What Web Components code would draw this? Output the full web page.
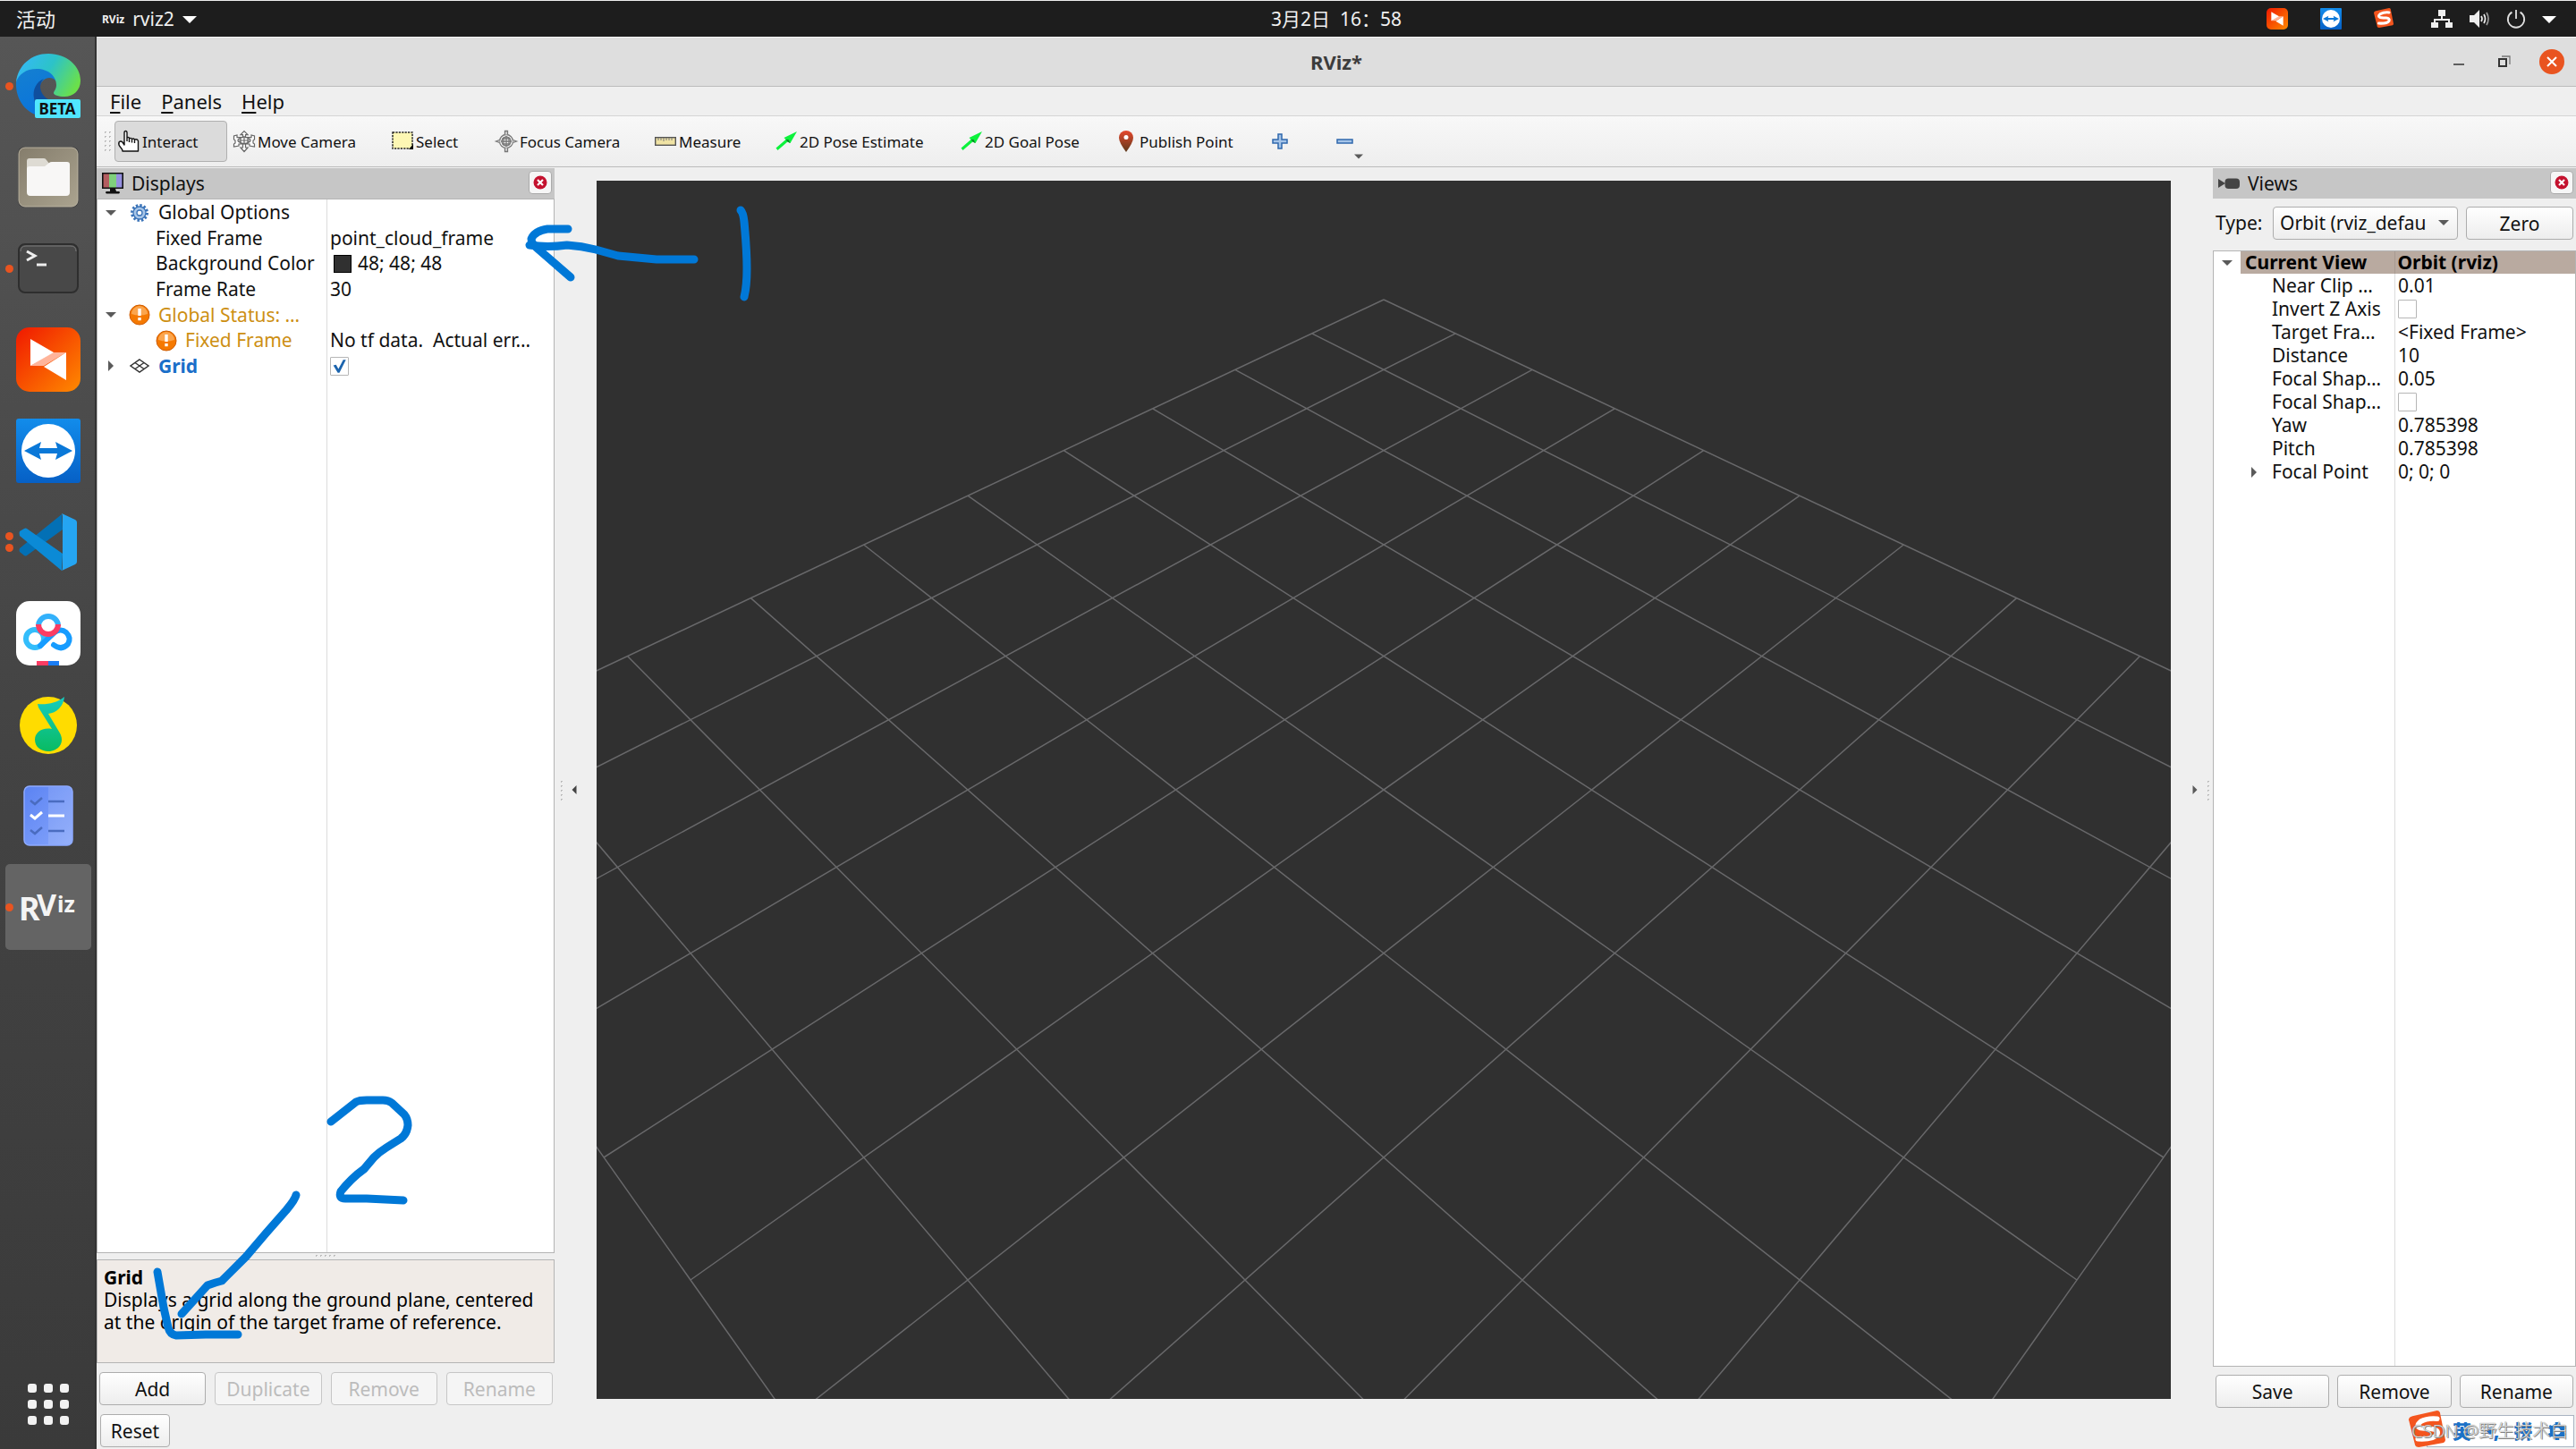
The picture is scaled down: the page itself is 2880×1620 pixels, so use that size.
<!DOCTYPE html>
<html lang="zh-CN">
<head>
<meta charset="utf-8">
<title>RViz*</title>
<style>
  html, body {
    margin: 0;
    height: 100%;
  }
  body {
    font-family: "Noto Sans", "Noto Sans CJK SC", sans-serif;
    font-size: 21px;
    line-height: 25px;
    color: #111;
    background: #efefef;
    overflow: hidden;
  }
</style>
</head>
<body>
<rviz-desktop></rviz-desktop>

<script>
const icons = {
  edge: `<svg viewBox="0 0 72 72">
    <defs>
      <linearGradient id="e1" x1="0" y1="0.2" x2="1" y2="0.6"><stop offset="0" stop-color="#35b8f8"/><stop offset="0.5" stop-color="#2cc3c8"/><stop offset="1" stop-color="#6be04a"/></linearGradient>
      <linearGradient id="e2" x1="0" y1="0" x2="0.4" y2="1"><stop offset="0" stop-color="#1580d0"/><stop offset="1" stop-color="#0a74dc"/></linearGradient>
    </defs>
    <path fill="url(#e2)" d="M0 32c2-10 10-16 22-16 13 0 22 7 23 15-3-4-8-5-12-3-6 3-8 10-6 17 3 9 10 14 19 16v6c-5 3-11 4-17 3C12 68-1 52 0 32z"/>
    <path fill="#0f4f9e" d="M31 28c-8 3-13 12-11 22 1 8 5 14 10 19l16-1V55c-10-2-18-8-19-17 0-4 1-7 4-10z"/>
    <path fill="url(#e1)" d="M0 32C2 13 17 0 36 0c21 0 36 14 36 30 0 11-8 18-18 18-7 0-12-2-12-4s3-4 3-9c0-10-9-18-22-18C11 17 3 23 0 32z"/>
    <rect x="21" y="51" width="51" height="21" rx="2" fill="#50e6ff"/>
    <text x="46" y="68" font-family="Noto Sans" font-size="17" font-weight="700" text-anchor="middle" fill="#111">BETA</text>
  </svg>`,
  files: `<svg viewBox="0 0 72 72">
    <defs><linearGradient id="f1" x1="0" y1="0" x2="1" y2="1"><stop offset="0" stop-color="#857d6c"/><stop offset="1" stop-color="#aaa38f"/></linearGradient></defs>
    <rect x="2" y="2" width="68" height="68" rx="8" fill="#3a3a3a"/>
    <rect x="3" y="3" width="66" height="66" rx="7" fill="url(#f1)" stroke="#bdb6a4"/>
    <path fill="#dedbd3" d="M12 32V18q0-3 3-3h16q2 0 3 2l4 5v10z"/>
    <path fill="#f8f7f6" d="M12 27q0-3 3-3h17l5-4q1-1 3-1h17q3 0 3 3v31q0 4-4 4H16q-4 0-4-4z"/>
  </svg>`,
  terminal: `<svg viewBox="0 0 72 72">
    <rect x="3" y="9" width="66" height="54" rx="7" fill="#484848" stroke="#2e2e2e" stroke-width="2"/>
    <path fill="none" stroke="#7a7a7a" d="M5 17q0-6 6-6h50q6 0 6 6"/>
    <path fill="none" stroke="#eee" stroke-width="3" d="M12 17l9 5-9 5M23 32h11"/>
  </svg>`,
  todesk: `<svg viewBox="0 0 72 72">
    <defs><linearGradient id="t1" x1="0" y1="0" x2="1" y2="1"><stop offset="0" stop-color="#f01800"/><stop offset="1" stop-color="#ff8a00"/></linearGradient></defs>
    <rect width="72" height="72" rx="15" fill="url(#t1)"/>
    <path fill="#ffb49a" d="M16 43L41 28h15L31 43z"/>
    <path fill="#fff" d="M16 13l26 15-26 15zM56 28v31L31 44z"/>
  </svg>`,
  teamviewer: `<svg viewBox="0 0 72 72">
    <defs><linearGradient id="v1" x1="0" y1="0" x2="0" y2="1"><stop offset="0" stop-color="#128ceb"/><stop offset="1" stop-color="#0660c6"/></linearGradient></defs>
    <rect width="72" height="72" rx="3" fill="url(#v1)"/>
    <circle cx="36" cy="36" r="30" fill="#fff"/>
    <path fill="#0a78d8" d="M9 36l19-10-2 7h20l-2-7 19 10-19 10 2-7H26l2 7z"/>
  </svg>`,
  vscode: `<svg viewBox="0 0 72 72">
    <path fill="#0370b5" d="M51 5L4 43q-1 2 0 4l5 4q2 1 3 0l40-29z"/>
    <path fill="#0b8ad6" d="M51 68L4 29q-1-3 0-5l5-3q2-1 3 0l40 28z"/>
    <path fill="#25a5f2" d="M51 4l15 7q2 1 2 3v44q0 2-2 3l-15 7q1-1 1-4V8q0-3-1-4z"/>
  </svg>`,
  netdisk: `<svg viewBox="0 0 72 72">
    <rect width="72" height="72" rx="15" fill="#fff"/>
    <circle cx="21" cy="42" r="10" fill="none" stroke="#33bdfb" stroke-width="6"/>
    <path fill="none" stroke="#169cff" stroke-width="6" stroke-linecap="round" d="M27 50L43 35q7-5 13 0 6 6 2 13-7 8-16 1"/>
    <path fill="none" stroke="#33b1fb" stroke-width="6" d="M25 28a11 11 0 0 1 22 0"/>
    <path fill="none" stroke="#fb3c63" stroke-width="6" d="M25 26a11 11 0 1 0 22 0"/>
    <path fill="#fb3c63" d="M23 67h13v5H23z"/><path fill="#1a7df5" d="M36 67h12v5H36z"/>
  </svg>`,
  music: `<svg viewBox="0 0 72 72">
    <defs><linearGradient id="m1" x1="0" y1="0" x2="0" y2="1"><stop offset="0" stop-color="#16ccc0"/><stop offset="1" stop-color="#09bb62"/></linearGradient></defs>
    <circle cx="36" cy="37" r="32" fill="#ffdc00"/>
    <path fill="url(#m1)" d="M24 13c10 1 22-1 30-8-1 11-9 18-18 19l12 20c8 12-1 22-12 22-8 0-15-5-15-13s8-14 19-12L25 17z"/>
  </svg>`,
  todo: `<svg viewBox="0 0 72 72">
    <defs><linearGradient id="d1" x1="0" y1="0" x2="1" y2="1"><stop offset="0" stop-color="#5b83f3"/><stop offset="1" stop-color="#87a6fb"/></linearGradient></defs>
    <rect x="9" y="3" width="54" height="66" rx="6" fill="url(#d1)" stroke="#8eabff" stroke-width="1.5"/>
    <path fill="#fff" opacity="0.12" d="M36 4h21q5 0 5 5v54q0 5-5 5H36z"/>
    <g fill="none" stroke-width="2.5">
      <path stroke="#4a6cc0" d="M16 19l5 4 8-7M36 20h18M16 52l5 4 8-7M36 53h18"/>
      <path stroke="#fff" stroke-width="3" d="M16 35l5 4 8-7M36 36h18"/>
    </g>
  </svg>`,
  rviz: `<svg viewBox="0 0 72 72">
    <g font-family="Noto Sans" font-weight="700" fill="#f4f4f4">
      <text x="3" y="51" font-size="36">R</text><text x="23" y="46" font-size="34">V</text><text x="46" y="42" font-size="25">iz</text>
    </g>
  </svg>`,
  apps: `<svg viewBox="0 0 72 72" fill="#f2f2f2">
    ${[13, 31, 49].map(y => [13, 31, 49].map(x => `<rect x="${x}" y="${y}" width="10" height="10" rx="3"/>`).join('')).join('')}
  </svg>`,
  sogou: `<svg viewBox="0 0 40 40">
    <path fill="#f4551e" d="M4 6L31 0q2 0 3 2l6 30q0 2-2 3l-27 5q-3 0-4-2L0 10q0-3 4-4z"/>
    <path fill="none" stroke="#fff" stroke-width="5.5" stroke-linecap="round" d="M31 9q-11-1-18 3-6 5 0 7 6 1 12 1 8 1 6 6-4 6-21 5"/>
  </svg>`,
  network: `<svg viewBox="0 0 24 24" fill="#eee">
    <path d="M8 2h8v7H8zM0 16h8v6H0zM16 16h8v6h-8z"/>
    <path fill="none" stroke="#eee" stroke-width="2" d="M12 8v5M4 17v-4h16v4"/>
  </svg>`,
  volume: `<svg viewBox="0 0 24 24">
    <path fill="#eee" d="M1 8h5l6-6v20l-6-6H1z"/>
    <path fill="none" stroke="#eee" stroke-width="1.7" d="M14 9q2 3 0 6M17 7q3 5 0 10"/>
    <path fill="none" stroke="#999" stroke-width="1.7" d="M20 5q4 7 0 14"/>
  </svg>`,
  power: `<svg viewBox="0 0 24 24">
    <path fill="none" stroke="#ddd" stroke-width="2" d="M7 4a10 10 0 1 0 10 0M12 1v11"/>
  </svg>`,
  caret: `<svg viewBox="0 0 16 16"><path fill="#fff" d="M0 5h16l-8 8z"/></svg>`,
  down: `<svg viewBox="0 0 12 12"><path fill="#5a5a5a" d="M0 3h12L6 9z"/></svg>`,
  right: `<svg viewBox="0 0 12 12"><path fill="#5a5a5a" d="M3 0l6 6-6 6z"/></svg>`,
  left: `<svg viewBox="0 0 12 12"><path fill="#444" d="M9 0L3 6l6 6z"/></svg>`,
  hand: `<svg viewBox="0 0 24 24">
    <path fill="#fff" stroke="#111" stroke-width="1.4" stroke-linejoin="round" d="M7 14V2.500q0-2 1.500-2t1.500 2V8q1-1 2.500 0v1q2-1.500 3 .5 2-1.200 3 .5 3-1 4 1.500V23H5q0-2-2-4-3-3-2-6 2-2 4 0l2 3zM10 8v4M12.500 9v4M15.500 9.500v4M18.500 10v4"/>
  </svg>`,
  move: `<svg viewBox="0 0 24 24" fill="#fff" stroke="#666" stroke-width="1.200">
    <path d="M12 .7l4 4h-2.500v3H20V5l3.500 1v4L22 11v3l1.500 1v3L18 17v-2h-4.500v4H16l-4 4.500-4-4.500h2.500v-4H6v2l-5.500 1v-3L2 14v-3L.5 10V6L4 5v2.700h6.500v-3H8z"/>
    <path fill="none" d="M5 10q7-6 14 0M5 12q7 5 14 0M12 6v10M4 11h16M8 8v7M16 8v7"/>
  </svg>`,
  select: `<svg viewBox="0 0 24 24">
    <path fill="#fdf7b4" stroke="#222" stroke-width="1.500" stroke-dasharray="2.200 1.200" d="M1 2h22v18H1z"/>
    <path fill="#000" d="M24 15v6h-5z"/>
  </svg>`,
  focus: `<svg viewBox="0 0 24 24" fill="none" stroke="#777" stroke-width="1.300">
    <circle cx="12" cy="12" r="7.500" fill="#fff"/><circle cx="12" cy="12" r="5"/>
    <path d="M12 6v12M6 12h12M9 7.500v9M15 7.500v9M7.500 9h9M7.500 15h9"/>
    <path fill="#ddd" d="M10.500 4.500V.5h3v4M10.500 19.500v4h3v-4M4.500 10.500L.5 12l4 1.500M19.500 10.500l4 1.500-4 1.500"/>
  </svg>`,
  measure: `<svg viewBox="0 0 24 24">
    <rect x="0.700" y="7.700" width="22.600" height="8.600" fill="#f0e3a4" stroke="#555" stroke-width="1.400"/>
    <path stroke="#777" d="M4 8v3M7 8v3M10 8v4M13 8v3M16 8v3M19 8v3"/>
  </svg>`,
  arrow: `<svg viewBox="0 0 24 24">
    <path fill="#0cf23c" d="M24 1L16.500 14l-3-1.500L2.500 22 .5 19.500 11.500 10 9.500 8z"/>
    <path fill="#0a8a26" d="M11.500 10l2 2.500 3 1.500-2-4z"/>
  </svg>`,
  pin: `<svg viewBox="0 0 24 24">
    <defs><linearGradient id="p1" x1="0" y1="0" x2="0" y2="1"><stop offset="0" stop-color="#e6472c"/><stop offset="1" stop-color="#5c3a1c"/></linearGradient></defs>
    <path fill="url(#p1)" d="M12 24Q4 13 4 8a8 8 0 0 1 16 0q0 5-8 16z"/><circle cx="12" cy="7.500" r="2.500" fill="#fff"/>
  </svg>`,
  plus: `<svg viewBox="0 0 24 24"><path fill="#a5c4e8" stroke="#2f68ad" stroke-width="1.500" d="M10 4h4v6h6v4h-6v6h-4v-6H4v-4h6z"/></svg>`,
  minus: `<svg viewBox="0 0 24 24"><path fill="#a5c4e8" stroke="#2f68ad" stroke-width="1.500" d="M4 10h17v4H4z"/></svg>`,
  monitor: `<svg viewBox="0 0 24 24">
    <path fill="#b35d60" d="M1 1h8v16H1z"/><path fill="#7fd07c" d="M8 1h8v16H8z"/><path fill="#9590e0" d="M16 1h7v16h-7z"/>
    <path fill="none" stroke="#111" stroke-width="1.600" d="M.8.8h22.400v16.400H.8z"/>
    <path fill="#111" d="M9 18h6l1 3h3q2 1 0 2.500H5q-2-1.500 0-2.500h4z"/>
  </svg>`,
  camera: `<svg viewBox="0 0 24 24"><path fill="#444" d="M0 7l8 5-8 5z"/><rect x="7.500" y="6.500" width="16.500" height="11.500" rx="4" fill="#444"/></svg>`,
  gear: `<svg viewBox="0 0 24 24">
    <circle cx="12" cy="12" r="8.500" fill="none" stroke="#3a73b8" stroke-width="3" stroke-dasharray="2.450 2"/>
    <circle cx="12" cy="12" r="7" fill="#a8c6e8" stroke="#3a73b8" stroke-width="1.300"/>
    <circle cx="12" cy="12" r="3" fill="#fff" stroke="#3a73b8" stroke-width="1.300"/>
  </svg>`,
  warn: `<svg viewBox="0 0 24 24">
    <circle cx="12" cy="12" r="11" fill="#f57900" stroke="#ce5c00"/>
    <path fill="#fba54d" d="M3 11a9 9 0 0 1 18 0q-9 3-18 0z"/>
    <path fill="#fff" d="M10.300 5h3.400v8h-3.400zM10.300 15h3.400v3.200h-3.400z"/>
  </svg>`,
  grid: `<svg viewBox="0 0 24 24"><path fill="none" stroke="#333" stroke-width="1.500" d="M12 5l10 7-10 7-10-7zM7 8.500l10 7M17 8.500l-10 7"/></svg>`,
  close: `<svg viewBox="0 0 24 24"><circle cx="12" cy="12" r="7.500" fill="#c4122f"/><path stroke="#fff" stroke-width="2.200" d="M9 9l6 6M15 9l-6 6"/></svg>`,
  minimize: `<svg viewBox="0 0 24 24"><path stroke="#333" stroke-width="1.500" d="M6 15h12"/></svg>`,
  restore: `<svg viewBox="0 0 24 24" fill="none" stroke="#333"><path stroke-width="2" d="M6 9h8v8H6z"/><path stroke="#777" stroke-width="1.300" d="M9 6h9v9"/></svg>`,
  quit: `<svg viewBox="0 0 28 28"><circle cx="14" cy="14" r="14" fill="#e95420"/><path stroke="#fff" stroke-width="2" d="M9 9l10 10M19 9L9 19"/></svg>`,
  cog: `<svg viewBox="0 0 24 24">
    <circle cx="12" cy="12" r="6.500" fill="none" stroke="#1b72c8" stroke-width="5"/>
    <path stroke="#1b72c8" stroke-width="5" d="M12 1v4M12 19v4M2 6.500l4 2M18 15.500l4 2M2 17.500l4-2M18 8.500l4-2"/>
  </svg>`
};

class AppIcon extends HTMLElement {
  connectedCallback() {
    this.attachShadow({ mode: 'open' });
    const size = this.getAttribute('size') || 24;
    this.shadowRoot.innerHTML = `
      <style>
        :host { display: block; flex: none; width: ${size}px; height: ${size}px; }
        svg { display: block; width: 100%; height: 100%; overflow: visible; }
      </style>
      ${icons[this.getAttribute('name')]}
    `;
  }
}
customElements.define('app-icon', AppIcon);

class TopBar extends HTMLElement {
  connectedCallback() {
    this.attachShadow({ mode: 'open' });
    this.shadowRoot.innerHTML = `
      <style>
        :host {
          display: grid;
          grid-template-columns: 108px 1fr auto 1fr;
          align-items: center;
          box-sizing: border-box;
          height: 41px;
          border-top: 1px solid #eee;
          background: #1d1d1d;
          color: #f0f0f0;
        }
        button { all: unset; display: flex; align-items: center; }
        .activities { padding-left: 18px; font-size: 22px; }
        .app { gap: 9px; padding-left: 6px; }
        .logo { font-weight: 700; font-size: 12px; }
        .clock { font-family: "Noto Sans", "Noto Sans CJK TC", sans-serif; }
        .tray { display: flex; justify-content: flex-end; align-items: center; padding-right: 22px; }
        .indicators { display: flex; gap: 36px; margin-right: 42px; }
        .system { gap: 18px; }
      </style>
      <button class="activities">活动</button>
      <button class="app"><span class="logo">RViz</span><span>rviz2</span><app-icon name="caret" size="16"></app-icon></button>
      <button class="clock" lang="zh-TW">3月2日&nbsp; 16：58</button>
      <div class="tray">
        <div class="indicators">
          <app-icon name="todesk"></app-icon>
          <app-icon name="teamviewer"></app-icon>
          <app-icon name="sogou" size="22"></app-icon>
        </div>
        <button class="system" aria-label="System">
          <app-icon name="network"></app-icon>
          <app-icon name="volume"></app-icon>
          <app-icon name="power" size="22"></app-icon>
          <app-icon name="caret" size="16"></app-icon>
        </button>
      </div>
    `;
  }
}
customElements.define('top-bar', TopBar);

class DockItem extends HTMLElement {
  connectedCallback() {
    this.attachShadow({ mode: 'open' });
    const windows = Number(this.getAttribute('windows') || 0);
    this.shadowRoot.innerHTML = `
      <style>
        :host { display: block; }
        button {
          all: unset;
          position: relative;
          display: grid;
          place-items: center;
          width: 96px;
          height: 96px;
          border-radius: 5px;
        }
        :host([active]) button { background: #646464; }
        .dots {
          position: absolute;
          left: 0;
          display: grid;
          gap: 4px;
        }
        .dots i { width: 9px; height: 9px; border-radius: 50%; background: #e95420; }
      </style>
      <button aria-label="${this.getAttribute('icon')}">
        <span class="dots">${'<i></i>'.repeat(windows)}</span>
        <app-icon name="${this.getAttribute('icon')}" size="72"></app-icon>
      </button>
    `;
  }
}
customElements.define('dock-item', DockItem);

class LauncherDock extends HTMLElement {
  connectedCallback() {
    this.attachShadow({ mode: 'open' });
    this.shadowRoot.innerHTML = `
      <style>
        :host {
          display: flex;
          flex-direction: column;
          gap: 6px;
          box-sizing: border-box;
          padding: 7px 4px 2px 6px;
          border-right: 2px solid #333;
          background: linear-gradient(#565656, #434343 50%, #3a3a3a);
        }
        .apps { margin-top: auto; }
      </style>
      <dock-item icon="edge" windows="1"></dock-item>
      <dock-item icon="files"></dock-item>
      <dock-item icon="terminal" windows="1"></dock-item>
      <dock-item icon="todesk"></dock-item>
      <dock-item icon="teamviewer"></dock-item>
      <dock-item icon="vscode" windows="2"></dock-item>
      <dock-item icon="netdisk"></dock-item>
      <dock-item icon="music"></dock-item>
      <dock-item icon="todo"></dock-item>
      <dock-item icon="rviz" windows="1" active></dock-item>
      <dock-item class="apps" icon="apps"></dock-item>
    `;
  }
}
customElements.define('launcher-dock', LauncherDock);

class TitleBar extends HTMLElement {
  connectedCallback() {
    this.attachShadow({ mode: 'open' });
    this.shadowRoot.innerHTML = `
      <style>
        :host {
          display: grid;
          grid-template-columns: 1fr auto 1fr;
          align-items: center;
          box-sizing: border-box;
          height: 56px;
          border-top: 1px solid #f6f6f6;
          border-bottom: 1px solid #bcbcbc;
          background: #dedede;
        }
        h1 { grid-column: 2; margin: 0; font-size: 22px; line-height: 25px; color: #3c3c3c; }
        .buttons { display: flex; justify-content: flex-end; align-items: center; gap: 27px; padding-right: 13px; }
        button { all: unset; }
      </style>
      <h1><slot></slot></h1>
      <div class="buttons">
        <button aria-label="Minimize"><app-icon name="minimize"></app-icon></button>
        <button aria-label="Restore"><app-icon name="restore"></app-icon></button>
        <button aria-label="Close"><app-icon name="quit" size="28"></app-icon></button>
      </div>
    `;
  }
}
customElements.define('title-bar', TitleBar);

class MenuBar extends HTMLElement {
  connectedCallback() {
    this.attachShadow({ mode: 'open' });
    this.shadowRoot.innerHTML = `
      <style>
        :host {
          display: flex;
          align-items: center;
          gap: 22px;
          box-sizing: border-box;
          height: 33px;
          padding: 0 15px;
          border-bottom: 1px solid #d4d4d4;
          font-size: 22px;
        }
        button { all: unset; }
        u { text-underline-offset: 3px; text-decoration-thickness: 2px; }
      </style>
      <button><u>F</u>ile</button>
      <button><u>P</u>anels</button>
      <button><u>H</u>elp</button>
    `;
  }
}
customElements.define('menu-bar', MenuBar);

class ToolButton extends HTMLElement {
  connectedCallback() {
    this.attachShadow({ mode: 'open' });
    this.shadowRoot.innerHTML = `
      <style>
        :host { display: block; width: var(--w); }
        button {
          all: unset;
          display: flex;
          align-items: center;
          gap: 3px;
          box-sizing: border-box;
          width: 100%;
          height: 46px;
          padding-left: 3px;
          border: 1px solid transparent;
          border-radius: 4px;
          font-size: 17px;
          white-space: nowrap;
        }
        :host([checked]) button { background: #dbdbdb; border-color: #b0b0b0; }
      </style>
      <button aria-label="${this.getAttribute('icon')}"><app-icon name="${this.getAttribute('icon')}"></app-icon><slot></slot></button>
    `;
  }
}
customElements.define('tool-button', ToolButton);

class ToolBar extends HTMLElement {
  connectedCallback() {
    this.attachShadow({ mode: 'open' });
    this.shadowRoot.innerHTML = `
      <style>
        :host {
          display: flex;
          align-items: center;
          gap: 3px;
          box-sizing: border-box;
          height: 57px;
          padding-left: 7px;
          border-bottom: 1px solid #bcbcbc;
          background: linear-gradient(#f8f8f8, #eee);
        }
        .grip {
          width: 10px;
          height: 27px;
          background: radial-gradient(circle, #bbb 1px, transparent 1px) 0 0 / 5px 5px;
        }
        .more { align-self: flex-end; margin-bottom: 6px; }
      </style>
      <div class="grip"></div>
      <tool-button icon="hand" checked style="--w: 126px">Interact</tool-button>
      <tool-button icon="move" style="--w: 174px">Move Camera</tool-button>
      <tool-button icon="select" style="--w: 113px">Select</tool-button>
      <tool-button icon="focus" style="--w: 175px">Focus Camera</tool-button>
      <tool-button icon="measure" style="--w: 132px">Measure</tool-button>
      <tool-button icon="arrow" style="--w: 204px">2D Pose Estimate</tool-button>
      <tool-button icon="arrow" style="--w: 170px">2D Goal Pose</tool-button>
      <tool-button icon="pin" style="--w: 169px">Publish Point</tool-button>
      <tool-button icon="plus" style="--w: 69px"></tool-button>
      <tool-button icon="minus" style="--w: 24px"></tool-button>
      <app-icon class="more" name="down" size="10"></app-icon>
    `;
  }
}
customElements.define('tool-bar', ToolBar);

class PushButton extends HTMLElement {
  connectedCallback() {
    this.attachShadow({ mode: 'open' });
    this.shadowRoot.innerHTML = `
      <style>
        :host { display: block; }
        button {
          box-sizing: border-box;
          width: 100%;
          height: 37px;
          padding: 1px 0 0;
          border: 1px solid #adadad;
          border-radius: 4px;
          background: linear-gradient(#fff, #ededed);
          font: inherit;
          color: inherit;
        }
        button:disabled { border-color: #c6c6c6; background: #f5f5f5; color: #bcbcbc; }
      </style>
      <button ${this.hasAttribute('disabled') ? 'disabled' : ''}><slot></slot></button>
    `;
  }
}
customElements.define('push-button', PushButton);

// Panel frame: grey caption with icon and close button, body in the default slot
class DockPanel extends HTMLElement {
  connectedCallback() {
    this.attachShadow({ mode: 'open' });
    this.shadowRoot.innerHTML = `
      <style>
        :host { display: flex; flex-direction: column; min-width: 0; }
        header {
          display: flex;
          align-items: center;
          gap: 9px;
          box-sizing: border-box;
          height: 34px;
          padding: 0 3px 0 6px;
          background: #c6c6c6;
        }
        h2 { flex: 1; margin: 0; padding-top: 1px; font-size: 21px; font-weight: 400; }
        button {
          display: grid;
          place-items: center;
          align-self: flex-start;
          width: 26px;
          height: 26px;
          margin-top: 3px;
          padding: 0;
          border: 1px solid #aaa;
          border-radius: 4px;
          background: #f6f6f6;
        }
      </style>
      <header>
        <app-icon name="${this.getAttribute('icon')}"></app-icon>
        <h2>${this.getAttribute('caption')}</h2>
        <button aria-label="Close ${this.getAttribute('caption')}"><app-icon name="close"></app-icon></button>
      </header>
      <slot></slot>
    `;
  }
}
customElements.define('dock-panel', DockPanel);

const trees = {
  displays: [
    { name: 'Global Options', arrow: 'down', icon: 'gear' },
    { name: 'Fixed Frame', level: 1, value: 'point_cloud_frame' },
    { name: 'Background Color', level: 1, value: '<i class="swatch"></i>48; 48; 48' },
    { name: 'Frame Rate', level: 1, value: '30' },
    { name: 'Global Status: …', arrow: 'down', icon: 'warn', kind: 'warning' },
    { name: 'Fixed Frame', level: 1, icon: 'warn', kind: 'warning', value: 'No tf data.&nbsp; Actual err…' },
    { name: 'Grid', arrow: 'right', icon: 'grid', kind: 'display', check: true }
  ],
  views: [
    { name: 'Current View', arrow: 'down', kind: 'current', value: 'Orbit (rviz)' },
    { name: 'Near Clip …', level: 1, value: '0.01' },
    { name: 'Invert Z Axis', level: 1, check: false },
    { name: 'Target Fra…', level: 1, value: '&lt;Fixed Frame&gt;' },
    { name: 'Distance', level: 1, value: '10' },
    { name: 'Focal Shap…', level: 1, value: '0.05' },
    { name: 'Focal Shap…', level: 1, check: false },
    { name: 'Yaw', level: 1, value: '0.785398' },
    { name: 'Pitch', level: 1, value: '0.785398' },
    { name: 'Focal Point', level: 1, arrow: 'right', value: '0; 0; 0' }
  ]
};

class PropertyTree extends HTMLElement {
  row(item, i) {
    const isCheck = 'check' in item;
    const name = isCheck ? `<label for="p${i}">${item.name}</label>` : item.name;
    const value = isCheck
      ? `<input type="checkbox" id="p${i}" ${item.check ? 'checked' : ''}>`
      : item.value || '';
    return `
      <tr class="${item.kind || ''}">
        <td><div class="name level${item.level || 0}">
          <span class="arrow">${item.arrow ? `<app-icon name="${item.arrow}" size="12"></app-icon>` : ''}</span>
          <span class="text">${item.icon ? `<app-icon name="${item.icon}"></app-icon>` : ''}<span>${name}</span></span>
        </div></td>
        <td class="value"><div>${value}</div></td>
      </tr>`;
  }

  connectedCallback() {
    this.attachShadow({ mode: 'open' });
    this.shadowRoot.innerHTML = `
      <style>
        :host {
          display: block;
          flex: 1;
          border: 1px solid #b4b4b4;
          background: linear-gradient(#dcdcdc, #dcdcdc) var(--split) 0 / 1px 100% no-repeat #fff;
        }
        table {
          width: 100%;
          height: var(--rows-height);
          table-layout: fixed;
          border-collapse: collapse;
        }
        col:first-child { width: var(--split); }
        td { padding: 1px 0 0; white-space: nowrap; }
        .name { display: flex; height: 25px; }
        .level1 { padding-left: 30px; }
        .arrow { display: grid; place-items: center; width: 30px; flex: none; }
        .text { display: flex; flex: 1; align-items: center; padding-left: 5px; }
        .text app-icon { margin-right: 9px; }
        .value div { display: flex; align-items: center; padding-left: 4px; }
        .swatch {
          box-sizing: border-box;
          width: 20px;
          height: 20px;
          margin: 0 7px 0 4px;
          border: 1px solid #000;
          background: #303030;
        }
        .warning .name { color: #cd8f13; }
        .display { color: #1a6fc9; font-weight: 700; }
        .current { font-weight: 700; color: #000; }
        .current td { padding: 0; }
        .current .text, .current .value { background: #b9aaa0; }
        .current .value { border-left: 1px solid #a89a91; }
        .current .value div { height: 25px; padding-left: 3px; }
        input {
          appearance: none;
          box-sizing: border-box;
          width: 21px;
          height: 21px;
          margin: 0;
          border: 1px solid #b6b6b6;
          border-radius: 1px;
          background: #fff;
        }
        input:checked::after {
          content: '';
          display: block;
          height: 100%;
          background: #1c64ad;
          clip-path: polygon(14% 46%, 30% 42%, 44% 68%, 72% 14%, 88% 14%, 50% 90%, 40% 90%);
        }
      </style>
      <table>
        <colgroup><col><col></colgroup>
        <tbody>${trees[this.getAttribute('source')].map((item, i) => this.row(item, i)).join('')}</tbody>
      </table>
    `;
  }
}
customElements.define('property-tree', PropertyTree);

class DisplaysPanel extends HTMLElement {
  connectedCallback() {
    this.attachShadow({ mode: 'open' });
    this.shadowRoot.innerHTML = `
      <style>
        :host { display: flex; min-width: 0; }
        dock-panel { flex: 1; }
        property-tree { --split: 256px; --rows-height: 200px; }
        .grip {
          align-self: center;
          width: 26px;
          height: 7px;
          background: radial-gradient(circle, #bbb 1px, transparent 1px) 0 0 / 5px 5px;
        }
        .help {
          box-sizing: border-box;
          height: 116px;
          padding: 7px;
          border: 1px solid #b4b4b4;
          background: #f0ebe7;
          color: #000;
          white-space: nowrap;
        }
        h3, p { margin: 0; font-size: 21px; }
        .buttons {
          display: grid;
          grid-template-columns: repeat(4, 1fr);
          gap: 10px;
          padding: 10px 2px 5px 3px;
        }
      </style>
      <dock-panel icon="monitor" caption="Displays">
        <property-tree source="displays"></property-tree>
        <div class="grip"></div>
        <div class="help">
          <h3>Grid</h3>
          <p>Displays a grid along the ground plane, centered<br>at the origin of the target frame of reference.</p>
        </div>
        <div class="buttons">
          <push-button>Add</push-button>
          <push-button disabled>Duplicate</push-button>
          <push-button disabled>Remove</push-button>
          <push-button disabled>Rename</push-button>
        </div>
      </dock-panel>
    `;
  }
}
customElements.define('displays-panel', DisplaysPanel);

class ViewsPanel extends HTMLElement {
  connectedCallback() {
    this.attachShadow({ mode: 'open' });
    this.shadowRoot.innerHTML = `
      <style>
        :host { display: flex; min-width: 0; }
        dock-panel { flex: 1; }
        property-tree { --split: 202px; --rows-height: 256px; }
        .type {
          display: grid;
          grid-template-columns: 55px 1fr 120px;
          column-gap: 9px;
          align-items: center;
          padding: 9px 3px 12px;
        }
        .combo { position: relative; display: flex; }
        .combo app-icon { position: absolute; right: 10px; top: 12px; pointer-events: none; }
        select {
          appearance: none;
          box-sizing: border-box;
          width: 100%;
          height: 37px;
          padding: 0 34px 0 7px;
          border: 1px solid #adadad;
          border-radius: 4px;
          background: linear-gradient(#fff, #ededed);
          font: inherit;
          color: inherit;
          text-overflow: clip;
        }
        .buttons {
          display: grid;
          grid-template-columns: repeat(3, 1fr);
          gap: 9px;
          padding: 9px 3px 2px;
        }
      </style>
      <dock-panel icon="camera" caption="Views">
        <div class="type">
          <label for="type">Type:</label>
          <div class="combo">
            <select id="type"><option>Orbit (rviz_default_plugins)</option></select>
            <app-icon name="down" size="12"></app-icon>
          </div>
          <push-button>Zero</push-button>
        </div>
        <property-tree source="views"></property-tree>
        <div class="buttons">
          <push-button>Save</push-button>
          <push-button>Remove</push-button>
          <push-button>Rename</push-button>
        </div>
      </dock-panel>
    `;
  }
}
customElements.define('views-panel', ViewsPanel);

class SplitHandle extends HTMLElement {
  connectedCallback() {
    this.attachShadow({ mode: 'open' });
    this.shadowRoot.innerHTML = `
      <style>
        :host { display: flex; align-items: center; justify-content: flex-start; gap: 7px; padding: 2px 5px 0; }
        :host([side="right"]) { flex-direction: row-reverse; padding: 2px 3px 0; }
        i {
          width: 5px;
          height: 25px;
          background: radial-gradient(circle, #bbb 1px, transparent 1px) 0 0 / 5px 5px;
        }
      </style>
      <i></i>
      <app-icon name="${this.getAttribute('side') === 'right' ? 'right' : 'left'}" size="10"></app-icon>
    `;
  }
}
customElements.define('split-handle', SplitHandle);

// 10x10 ground grid seen by an orbit camera: distance 10, yaw and pitch 45 degrees, 45 degree field of view
class SceneView extends HTMLElement {
  project(x, y) {
    const focal = 681 / Math.tan(Math.PI / 8);
    const away = (x + y) * Math.SQRT1_2;
    const side = (x - y) * Math.SQRT1_2;
    const depth = 10 + away * Math.SQRT1_2;
    return [focal * side / depth, -focal * away * Math.SQRT1_2 / depth].map(n => n.toFixed(1)).join(' ');
  }

  connectedCallback() {
    this.attachShadow({ mode: 'open' });
    let d = '';
    for (let i = -5; i <= 5; i++) {
      d += `M${this.project(i, -5)}L${this.project(i, 5)}`;
      d += `M${this.project(-5, i)}L${this.project(5, i)}`;
    }
    this.shadowRoot.innerHTML = `
      <style>
        :host { display: block; min-height: 0; margin: 14px 0 12px; background: #303030; }
        svg { display: block; width: 100%; height: 100%; }
      </style>
      <svg viewBox="-880 -681 1760 1362" preserveAspectRatio="xMidYMid slice">
        <path d="${d}" fill="none" stroke="#a0a0a4" stroke-opacity="0.5" stroke-width="1.500"/>
      </svg>
    `;
  }
}
customElements.define('scene-view', SceneView);

class ImeBar extends HTMLElement {
  connectedCallback() {
    this.attachShadow({ mode: 'open' });
    this.shadowRoot.innerHTML = `
      <style>
        :host { position: absolute; right: 2px; bottom: 2px; width: 185px; height: 41px; }
        .bar {
          display: flex;
          align-items: center;
          justify-content: space-between;
          box-sizing: border-box;
          height: 36px;
          margin: 5px 0 0 20px;
          padding: 0 7px 0 28px;
          border: 1px solid #a9b4c2;
          background: #fff;
          color: #1b72c8;
          font-weight: 900;
        }
        .logo { position: absolute; left: 0; top: 0; }
        .mark {
          position: absolute;
          left: 3px;
          top: 10px;
          font-size: 20px;
          font-weight: 300;
          white-space: nowrap;
          color: rgba(255, 255, 255, 0.8);
          text-shadow: 0 0 1px #444, 1px 1px 0 #888;
        }
      </style>
      <div class="bar"><span>英</span><span>•,</span><span>拼</span><app-icon name="cog" size="22"></app-icon></div>
      <app-icon class="logo" name="sogou" size="41"></app-icon>
      <span class="mark">CSDN @野生技术白</span>
    `;
  }
}
customElements.define('ime-bar', ImeBar);

// Freehand pen marks on top of the whole desktop
class PenMarks extends HTMLElement {
  connectedCallback() {
    this.attachShadow({ mode: 'open' });
    this.shadowRoot.innerHTML = `
      <style>
        :host { position: absolute; inset: 0; pointer-events: none; }
        svg { display: block; width: 100%; height: 100%; }
      </style>
      <svg viewBox="0 0 2880 1620" preserveAspectRatio="xMinYMin meet" fill="none" stroke="#0078d7" stroke-width="9" stroke-linecap="round" stroke-linejoin="round">
        <path d="M635 256H612Q598 258 594 267Q594 272 600 277L638 310"/>
        <path d="M592 274Q612 277 634 274Q650 275 666 279L691 286Q712 288 734 290H776"/>
        <path d="M828 235Q831 238 832 248Q835 280 835 300Q835 320 832 332"/>
        <path d="M370 1254L398 1232Q402 1230 410 1230H428Q434 1230 438 1233L452 1246Q456 1251 456 1258Q455 1268 448 1273L432 1283Q424 1288 418 1294L407 1307Q393 1317 381 1332Q378 1340 386 1340L410 1340L451 1342"/>
        <path d="M331 1336Q330 1341 320 1353L298 1378L275 1405L248 1432Q240 1434 232 1437L203 1469"/>
        <path d="M176 1422L183 1462L188 1484Q190 1492 197 1493L230 1492H266"/>
      </svg>
    `;
  }
}
customElements.define('pen-marks', PenMarks);

class RvizDesktop extends HTMLElement {
  connectedCallback() {
    this.attachShadow({ mode: 'open' });
    this.shadowRoot.innerHTML = `
      <style>
        :host {
          position: relative;
          display: grid;
          grid-template: auto 1fr / 108px 1fr;
          height: 100vh;
        }
        top-bar { grid-column: 1 / -1; }
        .window { display: flex; flex-direction: column; min-width: 0; min-height: 0; }
        main {
          display: grid;
          grid-template: 1fr / 512px 47px 1fr 47px 406px;
          flex: 1;
          min-height: 0;
          padding-top: 1px;
        }
        .footer { padding: 5px 4px 2px; }
        .footer push-button { width: 78px; }
      </style>
      <top-bar></top-bar>
      <launcher-dock></launcher-dock>
      <div class="window">
        <title-bar>RViz*</title-bar>
        <menu-bar></menu-bar>
        <tool-bar></tool-bar>
        <main>
          <displays-panel></displays-panel>
          <split-handle side="left"></split-handle>
          <scene-view></scene-view>
          <split-handle side="right"></split-handle>
          <views-panel></views-panel>
        </main>
        <div class="footer"><push-button>Reset</push-button></div>
      </div>
      <ime-bar></ime-bar>
      <pen-marks></pen-marks>
    `;
  }
}
customElements.define('rviz-desktop', RvizDesktop);
</script>
</body>
</html>
